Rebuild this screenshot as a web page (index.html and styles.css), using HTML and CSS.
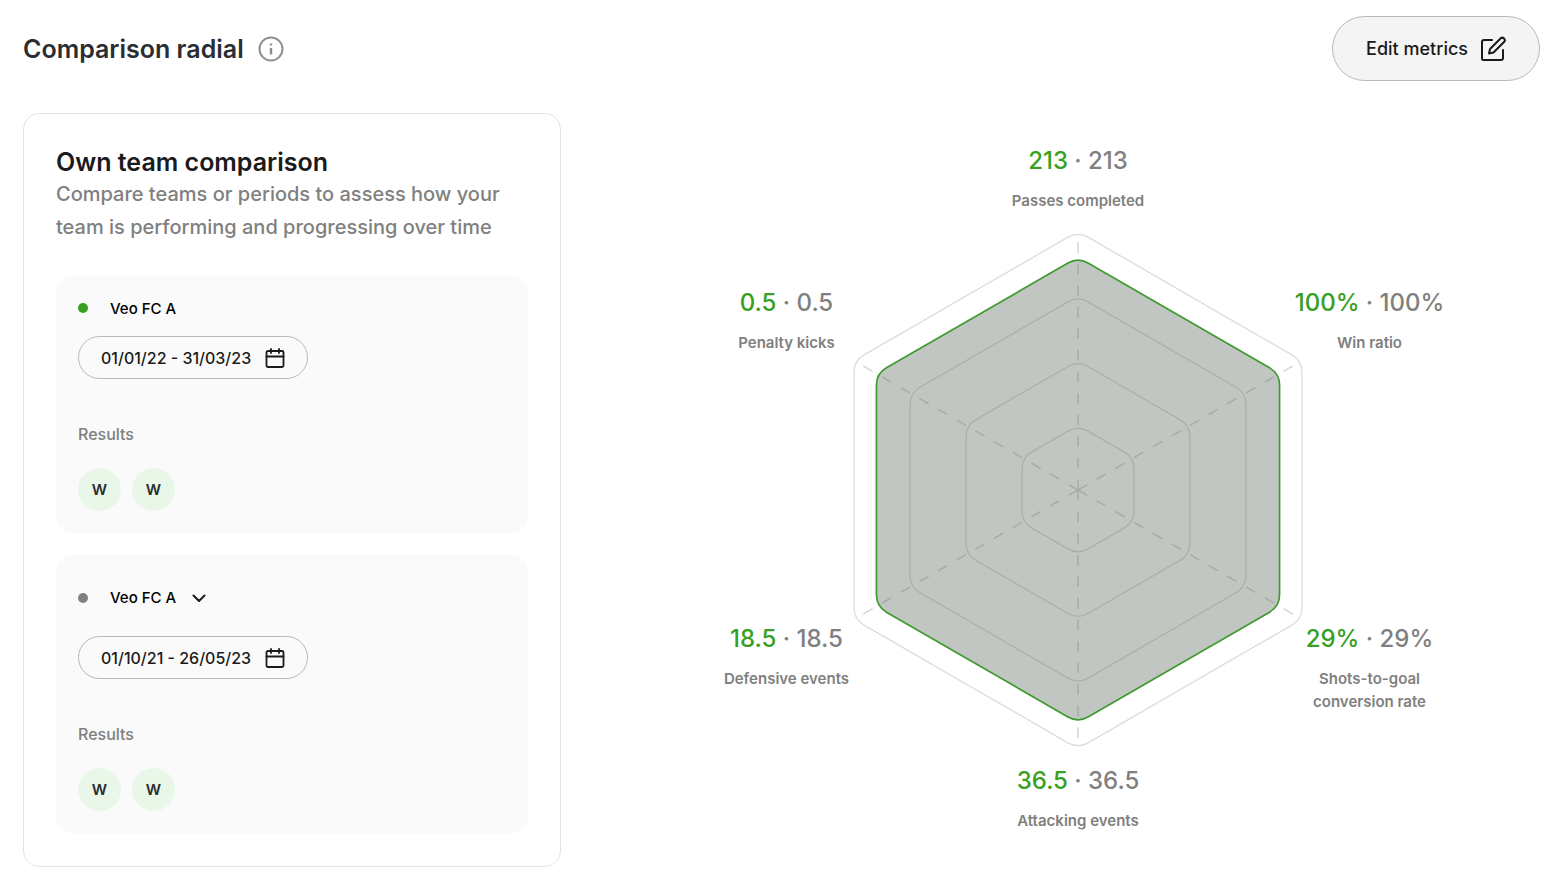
FILE: index.html
```html
<!DOCTYPE html>
<html lang="en">

<head>
    <meta charset="UTF-8">
    <meta name="viewport" content="width=device-width, initial-scale=1.0">
    <title>Comparison radial</title>
    <link rel="stylesheet" href="styles.css">
</head>

<body>
    <header class="header">
        <h1 class="title">Comparison radial</h1>
        <button class="info" type="button" aria-label="Info">
            <svg width="26" height="26" viewBox="0 0 26 26" fill="none" stroke="#8f8f8f" stroke-width="2">
                <circle cx="13" cy="13" r="11.5" />
                <path d="M13 12v6.500M13 7.500v2" stroke-width="2.400" />
            </svg>
        </button>
        <button class="edit" type="button">
            Edit metrics
            <svg width="26" height="26" viewBox="0 0 26 26" fill="none" stroke="#1a1a1a" stroke-width="2" stroke-linecap="round" stroke-linejoin="round">
                <path d="M12 4H4a2 2 0 0 0-2 2v16.500a1.500 1.500 0 0 0 1.500 1.500H21a2 2 0 0 0 2-2V14" />
                <path d="M9 17.500l1-4.500L20.500 2.500a2.300 2.300 0 0 1 3.500 3.500L13.500 16.500z" />
            </svg>
        </button>
    </header>

    <main class="content">
        <section class="card">
            <h2 class="card-title">Own team comparison</h2>
            <p class="card-text">Compare teams or periods to assess how your team is performing and progressing over time</p>

            <div class="panels">
                <div class="panel">
                    <div class="team">
                        <span class="dot green"></span>
                        <span>Veo FC A</span>
                    </div>
                    <button class="date" type="button">
                        01/01/22 - 31/03/23
                        <svg width="20" height="20" viewBox="0 0 20 20" fill="none" stroke="#1a1a1a" stroke-width="1.8" stroke-linecap="round">
                            <rect x="1.5" y="3" width="17" height="16" rx="1.5" />
                            <path d="M1.5 8.5h17M6 1v4M14 1v4" />
                        </svg>
                    </button>
                    <h3 class="results-title">Results</h3>
                    <div class="results">
                        <span class="badge">W</span>
                        <span class="badge">W</span>
                    </div>
                </div>

                <div class="panel">
                    <div class="team tall">
                        <span class="dot gray"></span>
                        <div class="picker">
                            <select class="select" aria-label="Team">
                                <option>Veo FC A</option>
                            </select>
                            <svg class="chevron" width="14" height="8" viewBox="0 0 14 8" fill="none" stroke="#1a1a1a" stroke-width="2" stroke-linecap="round" stroke-linejoin="round">
                                <path d="M1.5 1.5L7 7l5.5-5.5" />
                            </svg>
                        </div>
                    </div>
                    <button class="date" type="button">
                        01/10/21 - 26/05/23
                        <svg width="20" height="20" viewBox="0 0 20 20" fill="none" stroke="#1a1a1a" stroke-width="1.8" stroke-linecap="round">
                            <rect x="1.5" y="3" width="17" height="16" rx="1.5" />
                            <path d="M1.5 8.5h17M6 1v4M14 1v4" />
                        </svg>
                    </button>
                    <h3 class="results-title">Results</h3>
                    <div class="results">
                        <span class="badge">W</span>
                        <span class="badge">W</span>
                    </div>
                </div>
            </div>
        </section>

        <section class="chart">
            <div class="metric top">
                <div class="value"><span class="own">213</span> · 213</div>
                <div class="label">Passes completed</div>
            </div>

            <div class="side">
                <div class="metric">
                    <div class="value"><span class="own">0.5</span> · 0.5</div>
                    <div class="label">Penalty kicks</div>
                </div>
                <div class="metric">
                    <div class="value"><span class="own">18.5</span> · 18.5</div>
                    <div class="label">Defensive events</div>
                </div>
            </div>

            <svg class="radial" viewBox="-225 -260 450 520" fill="none">
                <g id="grid" stroke="#dcdcdc" stroke-width="1.3"></g>
                <g id="axes" stroke="#d8d8d8" stroke-width="1.6" stroke-dasharray="10.78"></g>
                <path id="area" fill="#57655a" fill-opacity="0.37" stroke="#3f9a30" stroke-width="1.7" />
            </svg>

            <div class="side">
                <div class="metric">
                    <div class="value"><span class="own">100%</span> · 100%</div>
                    <div class="label">Win ratio</div>
                </div>
                <div class="metric">
                    <div class="value"><span class="own">29%</span> · 29%</div>
                    <div class="label">Shots-to-goal conversion rate</div>
                </div>
            </div>

            <div class="metric bottom">
                <div class="value"><span class="own">36.5</span> · 36.5</div>
                <div class="label">Attacking events</div>
            </div>
        </section>
    </main>

    <script src="script.js"></script>
</body>

</html>
```

FILE: styles.css
```css
* {
    box-sizing: border-box;
}

body {
    margin: 0;
    padding: 16px 13px 8px 23px;
    background-color: #fff;
    color: #1a1a1a;
    font-family: Inter, "Liberation Sans", sans-serif;
    font-size: 16px;
    font-weight: 500;
}

h1, h2, h3, p {
    margin: 0;
}

button, select {
    font: inherit;
    color: inherit;
    cursor: pointer;
}

svg {
    display: block;
}

.header {
    display: flex;
    align-items: center;
    gap: 14px;
    margin-bottom: 32px;
}

.title {
    color: #2b2e30;
    font-size: 25px;
    font-weight: 600;
    line-height: 32px;
}

.info {
    padding: 0;
    border: none;
    background: none;
}

.edit {
    display: flex;
    align-items: center;
    gap: 12px;
    height: 65px;
    margin-left: auto;
    padding: 0 33px;
    border: 1px solid #b8b8b8;
    border-radius: 33px;
    background-color: #f4f4f4;
    font-size: 18px;
}

.content {
    display: flex;
    gap: 55px;
}

.card {
    flex: 0 1 538px;
    padding: 32px 32px 33px;
    border: 1px solid #e4e4e4;
    border-radius: 16px;
}

.card-title {
    font-size: 25px;
    font-weight: 600;
    line-height: 32px;
}

.card-text {
    margin-bottom: 32px;
    color: #808080;
    font-size: 20px;
    font-weight: 500;
    line-height: 33px;
}

.panels {
    display: flex;
    flex-direction: column;
    gap: 22px;
}

.panel {
    padding: 21px 22px 22px;
    border-radius: 16px;
    background-color: #fafafa;
}

.team {
    display: flex;
    align-items: center;
    gap: 22px;
    height: 22px;
    margin-bottom: 17px;
    color: #000;
    font-size: 15px;
}

.tall {
    height: 43px;
}

.dot {
    width: 10px;
    height: 10px;
    border-radius: 50%;
}

.green {
    background-color: #37a022;
}

.gray {
    background-color: #808080;
}

.picker {
    position: relative;
}

.select {
    padding: 0 29px 0 0;
    border: none;
    background: none;
    appearance: none;
}

.chevron {
    position: absolute;
    top: 50%;
    right: 0;
    transform: translateY(-50%);
    pointer-events: none;
}

.date {
    display: flex;
    align-items: center;
    justify-content: space-between;
    width: 230px;
    height: 43px;
    padding: 0 22px;
    border: 1px solid #b8b8b8;
    border-radius: 22px;
    background: none;
    white-space: nowrap;
}

.results-title {
    margin: 44px 0 23px;
    color: #808080;
    font-size: 16px;
    font-weight: 500;
    line-height: 22px;
}

.results {
    display: flex;
    gap: 11px;
}

.badge {
    display: flex;
    align-items: center;
    justify-content: center;
    width: 43px;
    height: 43px;
    border-radius: 50%;
    background-color: #e9f7e9;
    color: #2b2e30;
    font-size: 15px;
    font-weight: 600;
}

.chart {
    flex: 1;
    display: grid;
    grid-template-columns: 133px minmax(0, 450px) 133px;
    justify-content: center;
    align-content: start;
    padding-top: 31px;
}

.metric {
    display: flex;
    flex-direction: column;
    align-items: center;
    gap: 12px;
    color: #808080;
    text-align: center;
}

.top {
    grid-column: 1 / -1;
    margin-bottom: 18px;
}

.bottom {
    grid-column: 1 / -1;
    margin-top: 14px;
}

.side {
    display: flex;
    flex-direction: column;
    align-items: center;
    gap: 268px;
    padding-top: 56px;
}

.radial {
    width: 100%;
}

.value {
    font-size: 24px;
    font-weight: 500;
    line-height: 33px;
    white-space: nowrap;
}

.own {
    color: #37a022;
}

.label {
    font-size: 15px;
    font-weight: 600;
    line-height: 23px;
}
```

FILE: script.js
```js
const SIZE = 258.6;
const CORNER = 20;
const values = [0.9, 0.9, 0.9, 0.9, 0.9, 0.9];
const svgNS = "http://www.w3.org/2000/svg";

function getPoint(i, r) {
    const angle = (i * 60 - 90) * Math.PI / 180;
    return [r * Math.cos(angle), r * Math.sin(angle)];
}

// polygon with rounded corners
function getPath(list) {
    const points = list.map((v, i) => getPoint(i, v * SIZE));
    const cut = CORNER * Math.tan(Math.PI / 6);
    let d = "";

    for (let i = 0; i < points.length; i++) {
        const p = points[i];
        const prev = points[(i + 5) % 6];
        const next = points[(i + 1) % 6];
        const [a, b] = [prev, next].map(q => {
            const len = Math.hypot(q[0] - p[0], q[1] - p[1]);
            return [p[0] + (q[0] - p[0]) * cut / len, p[1] + (q[1] - p[1]) * cut / len];
        });
        d += `${i === 0 ? "M" : "L"}${a} A${CORNER} ${CORNER} 0 0 1 ${b} `;
    }
    return d + "Z";
}

for (const level of [0.25, 0.5, 0.75, 1]) {
    const path = document.createElementNS(svgNS, "path");
    path.setAttribute("d", getPath(Array(6).fill(level)));
    document.getElementById("grid").appendChild(path);
}

for (let i = 0; i < 6; i++) {
    const [x, y] = getPoint(i, SIZE);
    const path = document.createElementNS(svgNS, "path");
    path.setAttribute("d", `M0 0L${x} ${y}`);
    document.getElementById("axes").appendChild(path);
}

document.getElementById("area").setAttribute("d", getPath(values));
```
